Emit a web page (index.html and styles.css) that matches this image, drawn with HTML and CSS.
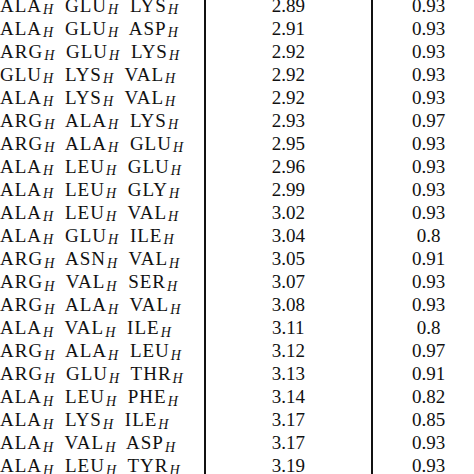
FILE: index.html
```html
<!DOCTYPE html>
<html>
<head>
<meta charset="utf-8">
<link rel="stylesheet" href="styles.css">
</head>
<body>
<table class="tbl">
<tbody>
<tr><td class="c1">ALA<span class="s">H</span> GLU<span class="s">H</span> LYS<span class="s">H</span></td><td class="c2">2.89</td><td class="c3">0.93</td></tr>
<tr><td class="c1">ALA<span class="s">H</span> GLU<span class="s">H</span> ASP<span class="s">H</span></td><td class="c2">2.91</td><td class="c3">0.93</td></tr>
<tr><td class="c1">ARG<span class="s">H</span> GLU<span class="s">H</span> LYS<span class="s">H</span></td><td class="c2">2.92</td><td class="c3">0.93</td></tr>
<tr><td class="c1">GLU<span class="s">H</span> LYS<span class="s">H</span> VAL<span class="s">H</span></td><td class="c2">2.92</td><td class="c3">0.93</td></tr>
<tr><td class="c1">ALA<span class="s">H</span> LYS<span class="s">H</span> VAL<span class="s">H</span></td><td class="c2">2.92</td><td class="c3">0.93</td></tr>
<tr><td class="c1">ARG<span class="s">H</span> ALA<span class="s">H</span> LYS<span class="s">H</span></td><td class="c2">2.93</td><td class="c3">0.97</td></tr>
<tr><td class="c1">ARG<span class="s">H</span> ALA<span class="s">H</span> GLU<span class="s">H</span></td><td class="c2">2.95</td><td class="c3">0.93</td></tr>
<tr><td class="c1">ALA<span class="s">H</span> LEU<span class="s">H</span> GLU<span class="s">H</span></td><td class="c2">2.96</td><td class="c3">0.93</td></tr>
<tr><td class="c1">ALA<span class="s">H</span> LEU<span class="s">H</span> GLY<span class="s">H</span></td><td class="c2">2.99</td><td class="c3">0.93</td></tr>
<tr><td class="c1">ALA<span class="s">H</span> LEU<span class="s">H</span> VAL<span class="s">H</span></td><td class="c2">3.02</td><td class="c3">0.93</td></tr>
<tr><td class="c1">ALA<span class="s">H</span> GLU<span class="s">H</span> ILE<span class="s">H</span></td><td class="c2">3.04</td><td class="c3">0.8</td></tr>
<tr><td class="c1">ARG<span class="s">H</span> ASN<span class="s">H</span> VAL<span class="s">H</span></td><td class="c2">3.05</td><td class="c3">0.91</td></tr>
<tr><td class="c1">ARG<span class="s">H</span> VAL<span class="s">H</span> SER<span class="s">H</span></td><td class="c2">3.07</td><td class="c3">0.93</td></tr>
<tr><td class="c1">ARG<span class="s">H</span> ALA<span class="s">H</span> VAL<span class="s">H</span></td><td class="c2">3.08</td><td class="c3">0.93</td></tr>
<tr><td class="c1">ALA<span class="s">H</span> VAL<span class="s">H</span> ILE<span class="s">H</span></td><td class="c2">3.11</td><td class="c3">0.8</td></tr>
<tr><td class="c1">ARG<span class="s">H</span> ALA<span class="s">H</span> LEU<span class="s">H</span></td><td class="c2">3.12</td><td class="c3">0.97</td></tr>
<tr><td class="c1">ARG<span class="s">H</span> GLU<span class="s">H</span> THR<span class="s">H</span></td><td class="c2">3.13</td><td class="c3">0.91</td></tr>
<tr><td class="c1">ALA<span class="s">H</span> LEU<span class="s">H</span> PHE<span class="s">H</span></td><td class="c2">3.14</td><td class="c3">0.82</td></tr>
<tr><td class="c1">ALA<span class="s">H</span> LYS<span class="s">H</span> ILE<span class="s">H</span></td><td class="c2">3.17</td><td class="c3">0.85</td></tr>
<tr><td class="c1">ALA<span class="s">H</span> VAL<span class="s">H</span> ASP<span class="s">H</span></td><td class="c2">3.17</td><td class="c3">0.93</td></tr>
<tr><td class="c1">ALA<span class="s">H</span> LEU<span class="s">H</span> TYR<span class="s">H</span></td><td class="c2">3.19</td><td class="c3">0.93</td></tr>
</tbody>
</table>
</body>
</html>
```

FILE: styles.css
```css
html, body {
  margin: 0;
  padding: 0;
  background: #ffffff;
  overflow: hidden;
  width: 474px;
  height: 474px;
}
.tbl {
  border-collapse: collapse;
  border-spacing: 0;
  margin-top: -6.5px;
  font-family: "Liberation Serif", "DejaVu Serif", serif;
  font-size: 19px;
  color: #111;
  table-layout: fixed;
  width: 484px;
}
.tbl td {
  padding: 0;
  height: 23.05px;
  line-height: 23.05px;
  white-space: nowrap;
}
.c1 {
  width: 203.5px;
  text-align: left;
  border-right: 2px solid #111;
  letter-spacing: 1px;
  word-spacing: 5px;
}
.c2 {
  width: 165.5px;
  text-align: center;
  border-right: 2px solid #111;
}
.c3 {
  text-align: center;
}
.s {
  font-style: italic;
  font-size: 14px;
  line-height: 0;
  vertical-align: -2.5px;
  margin-left: 1px;
  letter-spacing: 1px;
}
```
